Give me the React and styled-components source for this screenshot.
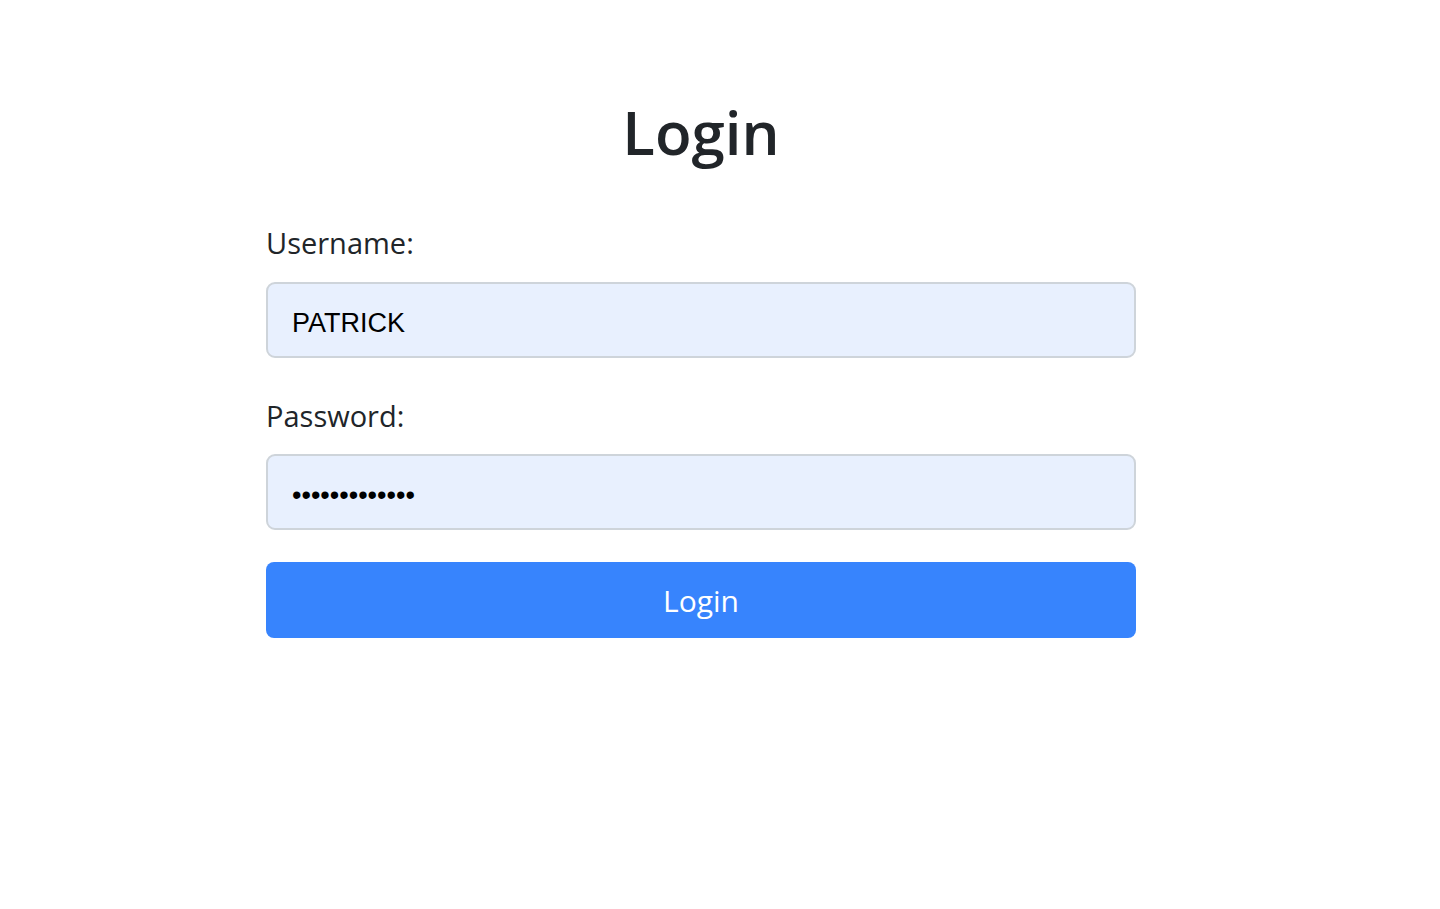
import React, { useState } from "react";
import styled, { createGlobalStyle } from "styled-components";

const GlobalStyle = createGlobalStyle`
  body {
    margin: 0;
    background: #ffffff;
    font-family: "Open Sans", "Noto Sans", sans-serif;
    color: #212529;
  }
`;

function App() {
  const [username, setUsername] = useState("PATRICK");
  const [password, setPassword] = useState("1234567890123");

  return (
    <Page>
      <GlobalStyle />
      <Container>
        <Title>Login</Title>
        <Form onSubmit={(e) => e.preventDefault()}>
          <Label htmlFor="username">Username:</Label>
          <Input
            id="username"
            type="text"
            value={username}
            onChange={(e) => setUsername(e.target.value)}
          />
          <Label htmlFor="password" $spaced>
            Password:
          </Label>
          <Input
            id="password"
            type="password"
            value={password}
            onChange={(e) => setPassword(e.target.value)}
          />
          <Button type="submit">Login</Button>
        </Form>
      </Container>
    </Page>
  );
}

const Page = styled.div`
  min-height: 909px;
  padding-right: 38px;
  box-sizing: border-box;
`;

const Container = styled.div`
  width: 870px;
  margin: 0 auto;
  padding-top: 96px;
`;

const Title = styled.h1`
  margin: 0;
  text-align: center;
  font-size: 60px;
  font-weight: 600;
  line-height: 1.2;
  color: #212529;
`;

const Form = styled.form`
  display: flex;
  flex-direction: column;
  margin-top: 53px;
`;

const Label = styled.label`
  font-size: 29px;
  line-height: 1.5;
  color: #212529;
  margin-top: ${(p) => (p.$spaced ? "36px" : "0")};
  margin-bottom: 17px;
`;

const Input = styled.input`
  box-sizing: border-box;
  height: 76px;
  width: 100%;
  padding: 7px 24px 0;
  border: 2px solid #ced4da;
  border-radius: 9px;
  background: #e8f0fe;
  font-family: "Liberation Sans", Arial, sans-serif;
  font-size: 27px;
  color: #000000;
  outline: none;
`;

const Button = styled.button`
  margin-top: 32px;
  height: 76px;
  width: 100%;
  border: none;
  border-radius: 8px;
  background: #3784fd;
  color: #ffffff;
  font-family: "Open Sans", "Noto Sans", sans-serif;
  font-size: 30px;
  padding-top: 2px;
  cursor: pointer;
`;

export default App;
